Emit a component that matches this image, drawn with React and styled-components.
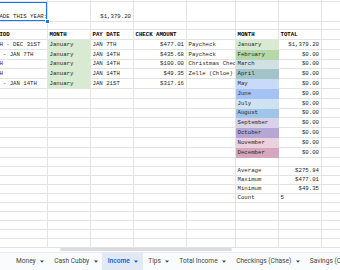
import styled, { createGlobalStyle } from 'styled-components';

const GlobalStyle = createGlobalStyle`
  body {
    margin: 0;
    background: #fff;
    overflow: hidden;
  }
`;

const COLS = '74px 43px 43px 53px 49px 43px 43px 60px';

const MONTHS = [
  ['January', '#d9ead3', '$1,379.20'],
  ['February', '#b6d7a8', '$0.00'],
  ['March', '#d0e0e3', '$0.00'],
  ['April', '#a2c4c9', '$0.00'],
  ['May', '#c9daf8', '$0.00'],
  ['June', '#a4c2f4', '$0.00'],
  ['July', '#cfe2f3', '$0.00'],
  ['August', '#9fc5e8', '$0.00'],
  ['September', '#d9d2e9', '$0.00'],
  ['October', '#b4a7d6', '$0.00'],
  ['November', '#ead1dc', '$0.00'],
  ['December', '#d5a6bd', '$0.00'],
];

const CHECKS = [
  ['DEC 18TH - DEC 31ST', 'JAN 7TH', '$477.01', 'Paycheck'],
  ['JAN 1ST - JAN 7TH', 'JAN 14TH', '$435.68', 'Paycheck'],
  ['JAN 14TH', 'JAN 14TH', '$100.00', 'Christmas Check'],
  ['JAN 14TH', 'JAN 14TH', '$49.35', 'Zelle (Chloe)'],
  ['JAN 8TH - JAN 14TH', 'JAN 21ST', '$317.16', ''],
];

const STATS = [
  ['Average', '$275.84', true],
  ['Maximum', '$477.01', true],
  ['Minimum', '$49.35', true],
  ['Count', '5', false],
];

const TABS = ['Money', 'Cash Cubby', 'Income', 'Tips', 'Total Income', 'Checkings (Chase)', 'Savings (Chase)'];

const Page = styled.div`
  width: 340px;
  height: 270px;
  display: flex;
  flex-direction: column;
  overflow: hidden;
`;

const Sheet = styled.div`
  height: 247.6px;
  overflow: hidden;
  font-family: 'Liberation Mono', 'Courier New', monospace;
  font-size: 5.7px;
  color: #262626;
`;

const Grid = styled.div`
  margin-left: -26px;
  width: 408px;
`;

const Row = styled.div`
  display: grid;
  grid-template-columns: ${COLS};
  height: ${(p) => p.$h}px;
`;

const Cell = styled.div`
  position: relative;
  box-sizing: border-box;
  display: flex;
  align-items: flex-end;
  justify-content: ${(p) => (p.$right ? 'flex-end' : 'flex-start')};
  padding: 0 2px 1px 1.5px;
  line-height: 7px;
  white-space: nowrap;
  overflow: ${(p) => (p.$selected ? 'visible' : 'hidden')};
  background: ${(p) => p.$bg || '#fff'};
  border-right: 1px solid ${(p) => p.$bg || '#e2e3e3'};
  border-bottom: 1px solid ${(p) => p.$bg || '#e2e3e3'};
  font-weight: ${(p) => (p.$bold ? 700 : 400)};
  color: ${(p) => (p.$bold ? '#000' : 'inherit')};
  box-shadow: ${(p) => (p.$selected ? 'inset 0 0 0 1px #1a73e8' : 'none')};

  ${(p) =>
    p.$selected &&
    `
    &::after {
      content: '';
      position: absolute;
      right: -3px;
      bottom: -3px;
      width: 3px;
      height: 3px;
      background: #1a73e8;
      border: 1px solid #fff;
      z-index: 2;
    }
  `}
`;

const ScrollTrack = styled.div`
  height: 4.4px;
  background: #fff;
  display: flex;
  align-items: center;
`;

const ScrollThumb = styled.div`
  margin-left: 60px;
  width: 172px;
  height: 3px;
  border-radius: 2px;
  background: #dadce0;
`;

const TabBar = styled.div`
  flex: 1;
  display: flex;
  align-items: center;
  padding-left: 10.5px;
  background: #f9fbfd;
  border-top: 1px solid #e8eaed;
  font-family: Roboto, 'Liberation Sans', sans-serif;
  font-size: 6.6px;
  white-space: nowrap;
`;

const Tab = styled.div`
  display: flex;
  align-items: center;
  gap: 4.5px;
  height: 100%;
  padding: 0 4.5px 0 5.5px;
  flex-shrink: 0;
  color: ${(p) => (p.$active ? '#0b57d0' : '#444746')};
  font-weight: ${(p) => (p.$active ? 500 : 400)};
  background: ${(p) => (p.$active ? '#e1e9f7' : 'transparent')};
`;

const Caret = () => (
  <svg width="4" height="3" viewBox="0 0 4 3">
    <path d="M0 0.5 L4 0.5 L2 2.7 Z" fill="currentColor" />
  </svg>
);

const blank = (h, key) => (
  <Row $h={h} key={key}>
    {Array.from({ length: 8 }).map((_, i) => (
      <Cell key={i} />
    ))}
  </Row>
);

const App = () => {
  return (
    <Page>
      <GlobalStyle />
      <Sheet>
        <Grid>
          {blank(2, 'top')}
          <Row $h={20}>
            <Cell $selected>TOTAL MADE THIS YEAR:</Cell>
            <Cell />
            <Cell $right>$1,379.20</Cell>
            <Cell />
            <Cell />
            <Cell />
            <Cell />
            <Cell />
          </Row>
          {blank(8, 'gap')}
          <Row $h={10}>
            <Cell $bold>PAY PERIOD</Cell>
            <Cell $bold>MONTH</Cell>
            <Cell $bold>PAY DATE</Cell>
            <Cell $bold>CHECK AMOUNT</Cell>
            <Cell />
            <Cell $bold>MONTH</Cell>
            <Cell $bold>TOTAL</Cell>
            <Cell />
          </Row>
          {MONTHS.map(([month, color, total], i) => {
            const check = CHECKS[i];
            return (
              <Row $h={9.8} key={month}>
                <Cell>{check ? check[0] : ''}</Cell>
                <Cell $bg={check ? '#d9ead3' : undefined}>{check ? 'January' : ''}</Cell>
                <Cell>{check ? check[1] : ''}</Cell>
                <Cell $right>{check ? check[2] : ''}</Cell>
                <Cell>{check ? check[3] : ''}</Cell>
                <Cell $bg={color}>{month}</Cell>
                <Cell $right>{total}</Cell>
                <Cell />
              </Row>
            );
          })}
          {blank(9, 'sep')}
          {STATS.map(([label, value, right]) => (
            <Row $h={9} key={label}>
              <Cell />
              <Cell />
              <Cell />
              <Cell />
              <Cell />
              <Cell>{label}</Cell>
              <Cell $right={right}>{value}</Cell>
              <Cell />
            </Row>
          ))}
          {[0, 1, 2, 3, 4].map((i) => blank(9, `b${i}`))}
        </Grid>
      </Sheet>
      <ScrollTrack>
        <ScrollThumb />
      </ScrollTrack>
      <TabBar>
        {TABS.map((name) => (
          <Tab key={name} $active={name === 'Income'}>
            {name}
            <Caret />
          </Tab>
        ))}
      </TabBar>
    </Page>
  );
};

export default App;
